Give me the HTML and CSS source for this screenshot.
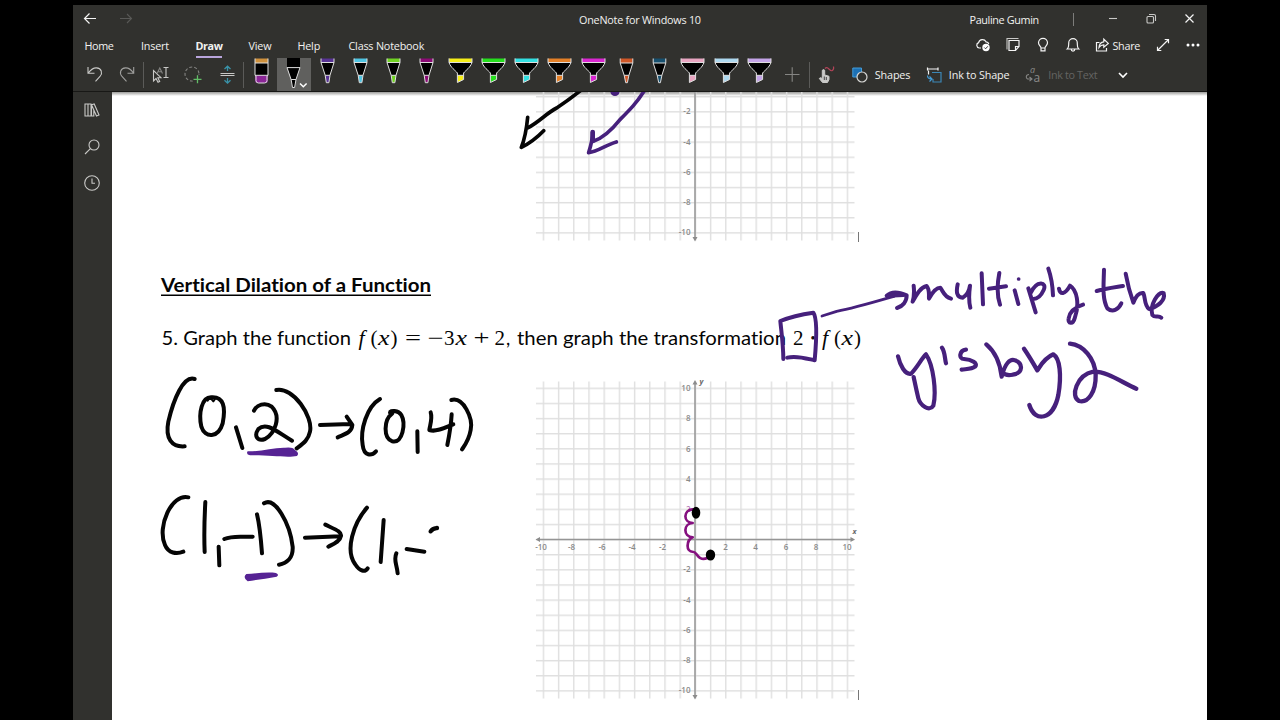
FILE: index.html
```html
<!DOCTYPE html>
<html lang="en">
<head>
<meta charset="utf-8">
<title>OneNote for Windows 10</title>
<link rel="stylesheet" href="styles.css">
</head>
<body>
<svg class="defs" width="0" height="0" aria-hidden="true">
  <symbol id="pen" viewBox="0 0 33 33">
    <path d="M10 4.5H23L19 17.3H14.200Z" fill="#000"/>
    <path d="M10 .5H23V4.500H10ZM14.300 17.300H18.900L17.900 24.600H15.300Z" fill="currentColor"/>
    <path d="M10 .5V4.500L14.200 17.300L15.300 24.700H17.900L19 17.300L23 4.500V.5M10 4.500H23M14.200 17.300H19" class="edge"/>
  </symbol>
  <symbol id="marker" viewBox="0 0 33 33">
    <path d="M5 4.500C7 10 11 12 13.400 15V17.300H19.600V15C22 12 26 10 28 4.500Z" fill="#000"/>
    <path d="M5 .4H28V4.500H5ZM13.400 17.300H19.600V21.500L13.400 24.500Z" fill="currentColor"/>
    <path d="M5 .4V4.500C7 10 11 12 13.400 15V24.500L19.600 21.500V15C22 12 26 10 28 4.500V.4M5 4.500H28M13.400 17.300H19.600" class="edge"/>
  </symbol>
  <symbol id="pencil" viewBox="0 0 33 33">
    <path d="M10.200 4.500H22.800L18.900 17.300H14.200Z" fill="#000"/>
    <path d="M10.200 .5H22.800V5H10.200ZM14.200 17.300H18.900L17.500 24.600H15.500Z" fill="currentColor"/>
    <path d="M10.200 .5V5L14.200 17.300L15.700 24.700H17.400L18.900 17.300L22.800 5V.5M10.200 5H22.800M14.200 17.300H18.900" class="edge"/>
  </symbol>
</svg>

<div class="app">
  <header class="titlebar">
    <div class="nav">
      <svg width="14" height="14" viewBox="0 0 14 14"><path d="M13 6.500H1.500M6.500 1.500L1.500 6.500L6.500 11.500" class="ln bright"/></svg>
      <svg width="14" height="14" viewBox="0 0 14 14"><path d="M1 6.500H12.500M8 2L12.500 6.500L8 11" class="ln faint"/></svg>
    </div>
    <div class="title">OneNote for Windows 10</div>
    <div class="account">
      <span class="user">Pauline Gumin</span>
      <span class="bar"></span>
      <svg width="10" height="12" viewBox="0 0 10 12"><path d="M1 5.500H9" class="ln"/></svg>
      <svg width="12" height="12" viewBox="0 0 12 12"><rect x="2" y="3.500" width="6.500" height="6.500" rx="1" class="ln"/><path d="M4 1.500H9Q10.500 1.500 10.500 3V8" class="ln"/></svg>
      <svg width="12" height="12" viewBox="0 0 12 12"><path d="M2.500 1.500L10.500 9.500M10.500 1.500L2.500 9.500" class="ln bright"/></svg>
    </div>
  </header>

  <nav class="tabs">
    <div class="tablist">
      <span class="tab home">Home</span><span class="tab insert">Insert</span><span class="tab draw">Draw</span><span class="tab view">View</span><span class="tab help">Help</span><span class="tab book">Class Notebook</span>
    </div>
    <div class="quick">
      <svg width="16" height="16" viewBox="0 0 16 16"><path d="M6 11H4.200A2.800 2.800 0 0 1 3.600 5.600A4 4 0 0 1 11 4.800A2.800 2.800 0 0 1 13.800 7" class="ln bright"/><circle cx="11" cy="10.500" r="3.700" fill="#fff"/><path d="M9.300 10.500L10.600 11.800L12.800 9.300" fill="none" stroke="#333"/></svg>
      <svg width="16" height="16" viewBox="0 0 16 16"><path d="M2 12.500V1.500H13.500" class="ln"/><path d="M4 3.500H14V9.500L10.500 13.500H4ZM14 9.500H10.500V13.500" class="ln bright"/></svg>
      <svg width="16" height="16" viewBox="0 0 16 16"><path d="M6 11C6 9 3.500 8.500 3.500 5.800A4.500 4.500 0 0 1 12.500 5.800C12.500 8.500 10 9 10 11ZM6 11V13.800H10V11" class="ln bright"/></svg>
      <svg width="16" height="16" viewBox="0 0 16 16"><path d="M2.300 12C4 10.500 3.700 8.500 3.700 6A4.300 4.300 0 0 1 12.300 6C12.300 8.500 12 10.500 13.700 12ZM6.200 12.300A1.800 1.800 0 0 0 9.800 12.300" class="ln bright"/></svg>
      <span class="share"><svg width="15" height="16" viewBox="0 0 15 16"><path d="M4.500 5.500H1.500V14H11.500V11" class="ln bright"/><path d="M4 10.500C4.200 7 6 5 8.800 4.800V2.200L13.300 6.400L8.800 10.300V7.900C6.700 7.900 5.300 8.500 4 10.500Z" class="ln bright"/></svg>Share</span>
      <svg width="16" height="16" viewBox="0 0 16 16"><path d="M2.500 13.500L13.500 2.500M9.700 2.500H13.500V6.300M2.500 9.700V13.500H6.300" class="ln bright"/></svg>
      <svg width="16" height="16" viewBox="0 0 16 16"><g fill="#fff"><circle cx="3" cy="8" r="1.500"/><circle cx="8" cy="8" r="1.500"/><circle cx="13" cy="8" r="1.500"/></g></svg>
    </div>
  </nav>

  <div class="ribbon">
    <div class="slot"><svg viewBox="0 0 33 33"><path d="M10 9V15.300H16.500M10.300 15C13 11.500 15.500 9.700 18.500 9.900C23.500 10.300 25 15 22 18.500L17.500 23.300" class="ln"/></svg></div>
    <div class="slot rule"><svg viewBox="0 0 33 33"><path d="M22.700 9V15.300H16.500M22.500 15C20 11.500 17.500 9.700 14.500 9.900C9.500 10.300 8 15 11 18.500L15.500 23.300" class="ln mid-tone"/></svg></div>
    <div class="slot"><svg viewBox="0 0 33 33"><path d="M9.500 12.500V23L12 20.500L14 24.300L15.700 23.400L13.800 19.700H17Z" class="ln"/><path d="M13 15.500L15.800 10L18.500 15.500M14 13.700H17.500" class="ln dim"/><path d="M19.500 9.500H24.500M22 9.500V19.500M19.500 19.500H24.500" class="ln"/></svg></div>
    <div class="slot"><svg viewBox="0 0 33 33"><circle cx="15" cy="16" r="7" class="ln dim" stroke-dasharray="3 2"/><circle cx="20.500" cy="21.500" r="5" fill="#31312e"/><path d="M20.500 17.300V25.300M16.500 21.300H24.500" stroke="#62bd67" stroke-width="1.300"/></svg></div>
    <div class="slot rule"><svg viewBox="0 0 33 33"><path d="M9.500 15.500H23.500M9.500 17.500H23.500" stroke="#c8c8c6"/><path d="M16.500 13V8.500M13.500 11L16.500 8.200L19.500 11M16.500 20V25M13.500 22.300L16.500 25.200L19.500 22.300" fill="none" stroke="#3993a9" stroke-width="1.300"/></svg></div>
    <div class="slot"><svg viewBox="0 0 33 33"><path d="M11 .5H24V5H11Z" fill="#cf913c"/><path d="M11 5H24V17.300H11Z" fill="#000"/><path d="M11 17.300H24V22.500Q24 25 21.500 25H13.500Q11 25 11 22.500Z" fill="#8b2697"/><path d="M11 .5V17.300L12 18V22.500Q12 25 14.500 25H20.500Q23 25 23 22.500V18L24 17.300V.5M11 5H24M11 17.300H24" class="edge"/></svg></div>
    <div class="slot selected"><svg viewBox="0 0 33 33"><path d="M10 0H23V9.600L19 21.500L17.800 29.500H15.300L14.100 21.500L10 9.600Z" fill="#000"/><path d="M10 9.600H23L19 21.500H14.100ZM14.100 21.500L15.500 29.500H17.600L19 21.500" class="edge"/><path d="M23 25.500L26.300 28.700L29.600 25.500" fill="none" stroke="#fff" stroke-width="1.500"/></svg></div>
    <div class="slot violet"><svg><use href="#pen"/></svg></div>
    <div class="slot sky"><svg><use href="#pen"/></svg></div>
    <div class="slot lime"><svg><use href="#pen"/></svg></div>
    <div class="slot plum"><svg><use href="#pen"/></svg></div>
    <div class="slot yellow"><svg><use href="#marker"/></svg></div>
    <div class="slot green"><svg><use href="#marker"/></svg></div>
    <div class="slot aqua"><svg><use href="#marker"/></svg></div>
    <div class="slot orange"><svg><use href="#marker"/></svg></div>
    <div class="slot magenta"><svg><use href="#marker"/></svg></div>
    <div class="slot rust"><svg><use href="#pencil"/></svg></div>
    <div class="slot navy"><svg><use href="#pencil"/></svg></div>
    <div class="slot pink"><svg><use href="#marker"/></svg></div>
    <div class="slot ice"><svg><use href="#marker"/></svg></div>
    <div class="slot lilac"><svg><use href="#marker"/></svg></div>
    <div class="slot rule"><svg viewBox="0 0 33 33"><path d="M9 16.500H23.500M16.200 9.300V23.700" class="ln dim"/></svg></div>
    <div class="slot"><svg viewBox="0 0 33 33"><path d="M12.300 20.500V12.300Q13.500 10.800 14.700 12.300V17L19 18.300V21.500L17.500 24.500H12.500L9.300 20.500Q9.800 18.800 12.300 20.500" fill="#c9c9c7" stroke="#c9c9c7"/><path d="M14.300 18.500V22M16.300 19V22" stroke="#444"/><path d="M15 10.500C18 7.500 19.500 13.500 22 12.700C24.500 11.500 23.500 9.500 23.500 8.500" fill="none" stroke="#b34459" stroke-width="1.200"/></svg></div>
    <div class="cmd shapes"><svg viewBox="0 0 16 16"><path d="M.8 1H9.500V10H.8Z" fill="#1c70b4" stroke="#439bd6"/><circle cx="10" cy="10" r="5" fill="#31312e" stroke="#d6d6d4" stroke-width="1.200"/></svg><span>Shapes</span></div>
    <div class="cmd toshape"><svg viewBox="0 0 16 16"><path d="M1.500 2H12M1.500 .5V3.500M12 .5V3.500M2.500 3.500V7.500" class="ln bright"/><path d="M6 5.500H15V15H7V12" fill="none" stroke="#3c87b6" stroke-width="1.200"/><path d="M1.500 8.500C1.500 11 3 12 5.500 12M3.500 9.500L6 12L3.500 14.500" fill="none" stroke="#429bd6" stroke-width="1.200"/></svg><span>Ink to Shape</span></div>
    <div class="cmd totext"><svg viewBox="0 0 16 20"><text x="5" y="7.500" class="aa slant">a</text><text x="8.500" y="17" class="aa large">a</text><path d="M4 9.500C.5 9.500 .5 14 3.500 14H7M4.500 12L7 14L4.500 16.200" class="ln dim"/></svg><span>Ink to Text</span></div>
    <svg class="more" viewBox="0 0 10 10" width="10" height="10"><path d="M1 3L5 7L9 3" fill="none" stroke="#fff" stroke-width="1.600"/></svg>
  </div>

  <div class="main">
    <aside class="rail">
      <svg viewBox="0 0 18 18"><path d="M2 3H5V15H2ZM5 3H8V15H5ZM8.500 3.800L11.200 3L16 14L13.500 15ZM8.500 3V15H10.800V9" class="ln"/></svg>
      <svg viewBox="0 0 18 18"><circle cx="11" cy="7" r="5" class="ln"/><path d="M7.400 10.600L2 16" class="ln"/></svg>
      <svg viewBox="0 0 18 18"><circle cx="9" cy="9" r="7.300" class="ln"/><path d="M9 4.500V9.300H12" class="ln"/></svg>
    </aside>
    <section class="page">
      <svg class="sheet" width="1095" height="628" viewBox="112 92 1095 628">
        <defs>
          <pattern id="squares" x="542.700" y="387.600" width="15.200" height="15.130" patternUnits="userSpaceOnUse">
            <path d="M0 .7H15.200M.7 0V15.130" stroke="#dfdfdf" stroke-width="1.400"/>
          </pattern>
          <g id="graph">
            <rect x="536" y="381.500" width="318.500" height="317" fill="url(#squares)"/>
            <path d="M695 383V697M538 539.500H853" class="axis"/>
            <path d="M692.500 384.500L695 380L697.500 384.500ZM692.500 695L695 699.500L697.500 695ZM540 537L535.500 539.500L540 542ZM850.500 537L855 539.500L850.500 542Z" fill="#8c8c8c"/>
            <g class="nums end">
              <text x="690.500" y="391">10</text><text x="690.500" y="421.300">8</text><text x="690.500" y="451.500">6</text><text x="690.500" y="481.800">4</text><text x="690.500" y="511.500" class="two">2</text>
              <text x="690.500" y="572.300">-2</text><text x="690.500" y="602.500">-4</text><text x="690.500" y="632.800">-6</text><text x="690.500" y="663">-8</text><text x="690.500" y="693.300">-10</text>
            </g>
            <g class="nums mid">
              <text x="541" y="550">-10</text><text x="571.500" y="550">-8</text><text x="602" y="550">-6</text><text x="632" y="550">-4</text><text x="662.500" y="550">-2</text>
              <text x="725.500" y="550">2</text><text x="755.500" y="550">4</text><text x="786" y="550">6</text><text x="816" y="550">8</text><text x="847" y="550">10</text>
              <text x="701.500" y="383.500" class="var">y</text><text x="854.500" y="533.500" class="var">x</text>
            </g>
          </g>
        </defs>
        <use href="#graph" y="-458"/>
        <use href="#graph"/>
        <path d="M858.500 232V242M858.500 690V700" stroke="#777"/>

        <g class="doc">
          <text x="161" y="292.300" class="heading" textLength="270" lengthAdjust="spacingAndGlyphs">Vertical Dilation of a Function</text>
          <path d="M161 295.300H431" stroke="#000" stroke-width="1.500"/>
          <text x="161.500" y="345" textLength="189.500" lengthAdjust="spacingAndGlyphs">5. Graph the function</text>
          <g class="math">
            <text x="358.500" y="345" class="it">f</text><text x="370.500" y="345">(</text><text x="378" y="345" class="it" textLength="11.500" lengthAdjust="spacingAndGlyphs">x</text><text x="390.500" y="345">)</text>
            <text x="405" y="345" textLength="16" lengthAdjust="spacingAndGlyphs">=</text><text x="427.500" y="345" textLength="16" lengthAdjust="spacingAndGlyphs">−</text>
            <text x="444" y="345">3</text><text x="455.500" y="345" class="it" textLength="11.500" lengthAdjust="spacingAndGlyphs">x</text><text x="473.500" y="345" textLength="16" lengthAdjust="spacingAndGlyphs">+</text><text x="494.500" y="345">2</text>
            <text x="793" y="345">2</text><text x="809.500" y="345" stroke="#111">·</text>
            <text x="822" y="345" class="it">f</text><text x="834" y="345">(</text><text x="841.500" y="345" class="it" textLength="11.500" lengthAdjust="spacingAndGlyphs">x</text><text x="854" y="345">)</text>
          </g>
          <text x="506" y="345">,</text>
          <text x="517" y="345" textLength="269" lengthAdjust="spacingAndGlyphs">then graph the transformation</text>
        </g>

        <g class="ink black" transform="translate(500 88) scale(.33333)">
          <path d="M245 5C220 25 200 40 170 60C140 75 120 100 83 120M83 88C80 120 75 150 64 178C90 165 110 150 131 128" stroke-width="11"/>
        </g>
        <g class="ink purple" transform="translate(500 88) scale(.33333)">
          <path d="M435 5C410 45 390 65 360 95C340 120 310 150 280 160M278 132C278 155 272 175 266 194C295 190 315 172 349 162" stroke-width="11"/>
          <path d="M278 132V158" stroke-width="14"/>
          <circle cx="345" cy="10" r="8" fill="#46207c"/>
        </g>

        <g class="ink wine" transform="translate(500 500) scale(.33333)">
          <path d="M578 28C550 30 548 67 578 69C550 70 548 110 578 112C560 120 555 155 580 156C590 153 593 186 622 174" stroke-width="8"/>
        </g>
        <ellipse cx="696" cy="512.800" rx="4.300" ry="6"/>
        <ellipse cx="710.500" cy="555" rx="4.700" ry="5.500"/>

        <g class="ink purple" transform="translate(770 255) scale(.33333)">
          <path d="M40 312C40 270 34 230 31 198C60 186 95 178 130 173C142 190 140 250 134 316C115 312 80 300 52 308" stroke-width="12"/>
          <path d="M156 183L200 169C250 160 300 145 372 124" stroke-width="8.500"/>
          <path d="M350 122C365 108 390 112 410 121C410 140 398 154 381 159"/>
          <path d="M355 122L400 120" stroke-width="12"/>
          <path d="M431 92C433 110 431 130 428 140C440 118 452 96 470 93C480 105 476 120 477 131C488 110 500 98 511 98C520 110 522 125 543 131M563 88C558 110 560 128 578 128C590 122 598 105 600 92C597 115 596 140 601 158M635 55L639 148M688 54C681 90 680 120 690 149M657 101L708 94M734 106L745 147M775 100L797 172M782 114C800 75 832 80 821 105C812 125 800 132 790 132M835 41C845 70 848 95 849 121M867 101C870 120 885 120 900 92C920 105 930 145 914 190C909 210 893 206 896 190C900 165 920 155 939 149"/>
          <path d="M1002 44C1001 90 996 130 1012 160C1028 173 1045 164 1054 145M980 108C1005 101 1035 97 1059 93M1067 56C1073 90 1080 115 1090 143C1097 125 1108 112 1120 114C1127 130 1122 150 1137 162C1165 155 1187 135 1181 114C1165 108 1138 150 1147 180C1155 190 1165 180 1174 188"/>
          <path d="M384 304C390 330 405 360 423 356C440 340 455 310 468 298C490 330 500 410 490 452C478 472 450 450 445 430C438 400 434 380 431 366M516 278C525 290 524 310 528 325M588 284C568 286 565 312 582 312C605 314 625 325 615 335C605 343 588 342 575 344M649 268C675 290 690 320 695 365C705 325 720 310 735 316C760 325 760 355 728 359C710 363 702 358 696 352" stroke-width="12.500"/>
          <path d="M762 281C775 300 790 325 802 346C810 335 822 310 850 298C870 310 875 360 865 420C850 495 795 505 778 450M900 266C940 270 975 310 977 360C978 410 955 445 927 438C900 425 920 360 970 350C1010 348 1060 385 1099 401" stroke-width="13"/>
          <circle cx="746" cy="72" r="5.500" fill="#46207c" stroke="none"/>
        </g>

        <g class="ink black" transform="translate(150 370) scale(.33333)">
          <path d="M134 27C100 15 70 90 55 155C45 205 65 232 104 229"/>
          <path d="M185 82C155 80 145 130 154 170C165 205 205 205 218 160C228 110 220 80 185 82Z"/>
          <path d="M173 92L180 82L190 94L197 84" stroke-width="6"/>
          <path d="M258 172L277 234M312 122C320 105 345 95 365 110C395 140 375 190 345 207C322 215 311 198 325 177C350 155 380 185 426 212M379 60C430 50 490 140 480 185C475 210 460 220 440 235"/>
          <path d="M510 165L602 162M590 140L607 165C605 188 585 192 563 202M690 87C650 110 630 180 638 225C642 260 665 258 678 244M727 130C700 150 700 205 727 214C758 222 768 160 754 135C745 120 720 120 720 128M802 184L803 246M842 127C848 145 840 165 838 180C860 188 890 170 910 163M905 133C903 170 896 205 892 225M904 90C940 80 970 145 962 180C957 210 945 225 936 238"/>
          <path d="M115 382C65 370 20 470 45 525C55 550 80 553 100 545M166 396C163 450 162 500 164 546M206 530L208 586M223 507C250 495 280 502 308 500M321 433C330 470 333 510 336 550M342 400C375 380 420 460 428 530C430 565 410 580 387 584"/>
          <path d="M465 503L570 499M526 464C560 480 575 485 573 498C570 515 550 522 535 530M651 413C610 460 585 540 615 582C630 605 645 607 653 595M701 450L692 576M739 550C730 570 740 580 743 610M770 537L823 545"/>
          <path d="M842 484C848 475 854 475 861 474" stroke-width="13"/>
        </g>
        <g fill="#562394" transform="translate(150 370) scale(.33333)">
          <path d="M293 244C330 245 370 232 405 233Q428 230 434 239Q450 249 441 258C410 264 360 255 300 256Q287 252 293 244Z"/>
          <path d="M289 612C320 611 350 605 378 609Q389 614 380 620C350 626 320 629 293 634Q277 622 289 612Z"/>
        </g>
      </svg>
    </section>
  </div>
</div>
</body>
</html>
```
FILE: styles.css
```css
* { box-sizing: border-box; }

body {
  margin: 0;
  background: #000;
  font-family: "Open Sans", "Noto Sans", sans-serif;
  font-size: 10.8px;
  color: #f2f2f0;
  overflow: hidden;
}

.defs { display: block; }

.app {
  width: 1134px;
  height: 715px;
  margin: 5px 0 0 73px;
  display: flex;
  flex-direction: column;
  background: #31312e;
}

.ln { fill: none; stroke: #c9c9c7; stroke-width: 1.1; }
.bright { stroke: #f4f4f4; stroke-width: 1.2; }
.dim { stroke: #858583; }
.mid-tone { stroke: #a0a09e; }
.faint { stroke: #595957; }
.edge { fill: none; stroke: #dedede; stroke-width: 1; }

/* Title bar */
.titlebar {
  height: 28px;
  display: grid;
  grid-template-columns: 506px 200px 1fr;
  align-items: center;
}
.nav { display: flex; gap: 22px; padding-left: 10px; }
.title { white-space: nowrap; letter-spacing: -.23px; }
.account { display: flex; align-items: center; padding-left: 190.5px; }
.user { width: 103px; white-space: nowrap; letter-spacing: -.35px; }
.bar { width: 1px; height: 13px; background: #7d7d7b; margin-right: 34px; }
.account svg { margin-right: 27px; flex: none; }
.account svg + svg { margin-right: 26px; }

/* Tabs */
.tabs { height: 25px; display: flex; }
.tablist { display: flex; padding-left: 11.5px; }
.tab { line-height: 25px; white-space: nowrap; letter-spacing: -.2px; }
.home { width: 56.5px; letter-spacing: -.4px; }
.insert { width: 54.500px; }
.draw { width: 53px; font-weight: 700; letter-spacing: -.4px; }
.draw::after { content: ""; display: block; width: 26px; height: 2px; margin-top: -2px; background: #b9a5dc; }
.view { width: 49px; }
.help { width: 51px; }
.quick { margin-left: auto; display: flex; align-items: center; padding: 0 6.500px 1px 0; gap: 14px; }
.share { display: flex; align-items: center; gap: 3px; width: 46px; letter-spacing: -.3px; }

/* Ribbon */
.ribbon {
  height: 34px;
  padding-left: 4.700px;
  display: flex;
  align-items: flex-start;
  border-bottom: 1px solid #181816;
}
.slot { width: 33.28px; height: 33px; flex: none; }
.slot svg { display: block; width: 33px; height: 33px; }
.rule { background: linear-gradient(#5b5b59, #5b5b59) right 4px / 1px 26px no-repeat; }
.selected { background: #60605e; }
.violet { color: #583395; }
.sky { color: #4fc4e2; }
.lime { color: #70d322; }
.plum { color: #8c0a76; }
.yellow { color: #f6ee18; }
.green { color: #25de1d; }
.aqua { color: #32dfe2; }
.orange { color: #e58027; }
.magenta { color: #d926d1; }
.rust { color: #cf5727; }
.navy { color: #17506f; }
.pink { color: #e8a5c1; }
.ice { color: #add8ef; }
.lilac { color: #c4a4e8; }

.cmd { height: 33px; display: flex; align-items: center; gap: 7px; flex: none; white-space: nowrap; letter-spacing: -.15px; }
.cmd svg { width: 16px; height: 16px; flex: none; }
.shapes { width: 74px; padding-left: 9px; }
.toshape { width: 99px; padding-left: 9px; }
.totext { width: 102px; padding-left: 9.500px; color: #646462; letter-spacing: -.35px; }
.totext svg { height: 20px; overflow: visible; }
.aa { font: 9px "Open Sans", sans-serif; fill: #8c8c8a; }
.large { font-size: 12px; }
.slant { font-style: italic; }
.more { margin-top: 12px; flex: none; }

/* Body */
.main { flex: 1; display: flex; min-height: 0; }
.rail {
  width: 39px;
  padding: 9px 2px 0 0;
  display: flex;
  flex-direction: column;
  align-items: center;
  gap: 18.5px;
}
.rail svg { width: 18px; height: 18px; flex: none; }
.page {
  flex: 1;
  background: linear-gradient(#9b9b99, #fff 4px);
  overflow: hidden;
}
.sheet { display: block; }

.axis { fill: none; stroke: #959595; stroke-width: 1.5; }
.nums { font: 600 8px "Open Sans", sans-serif; fill: #8a8a8a; }
.end { text-anchor: end; }
.mid { text-anchor: middle; }
.two { fill: #b97fb9; }
.var { font-style: italic; font-weight: 700; fill: #666; font-size: 7.500px; }

.doc { font: 18.6px Lato, sans-serif; fill: #050505; font-variant-ligatures: none; }
.heading { font-weight: 700; }
.math { font: 21px "Liberation Serif", serif; }
.it { font-style: italic; font-size: 22px; }

.ink path { fill: none; stroke-linecap: round; stroke-linejoin: round; }
.ink { stroke-width: 12; }
.black { stroke: #050505; }
.purple { stroke: #46207c; }
.wine { stroke: #85107f; }
```
